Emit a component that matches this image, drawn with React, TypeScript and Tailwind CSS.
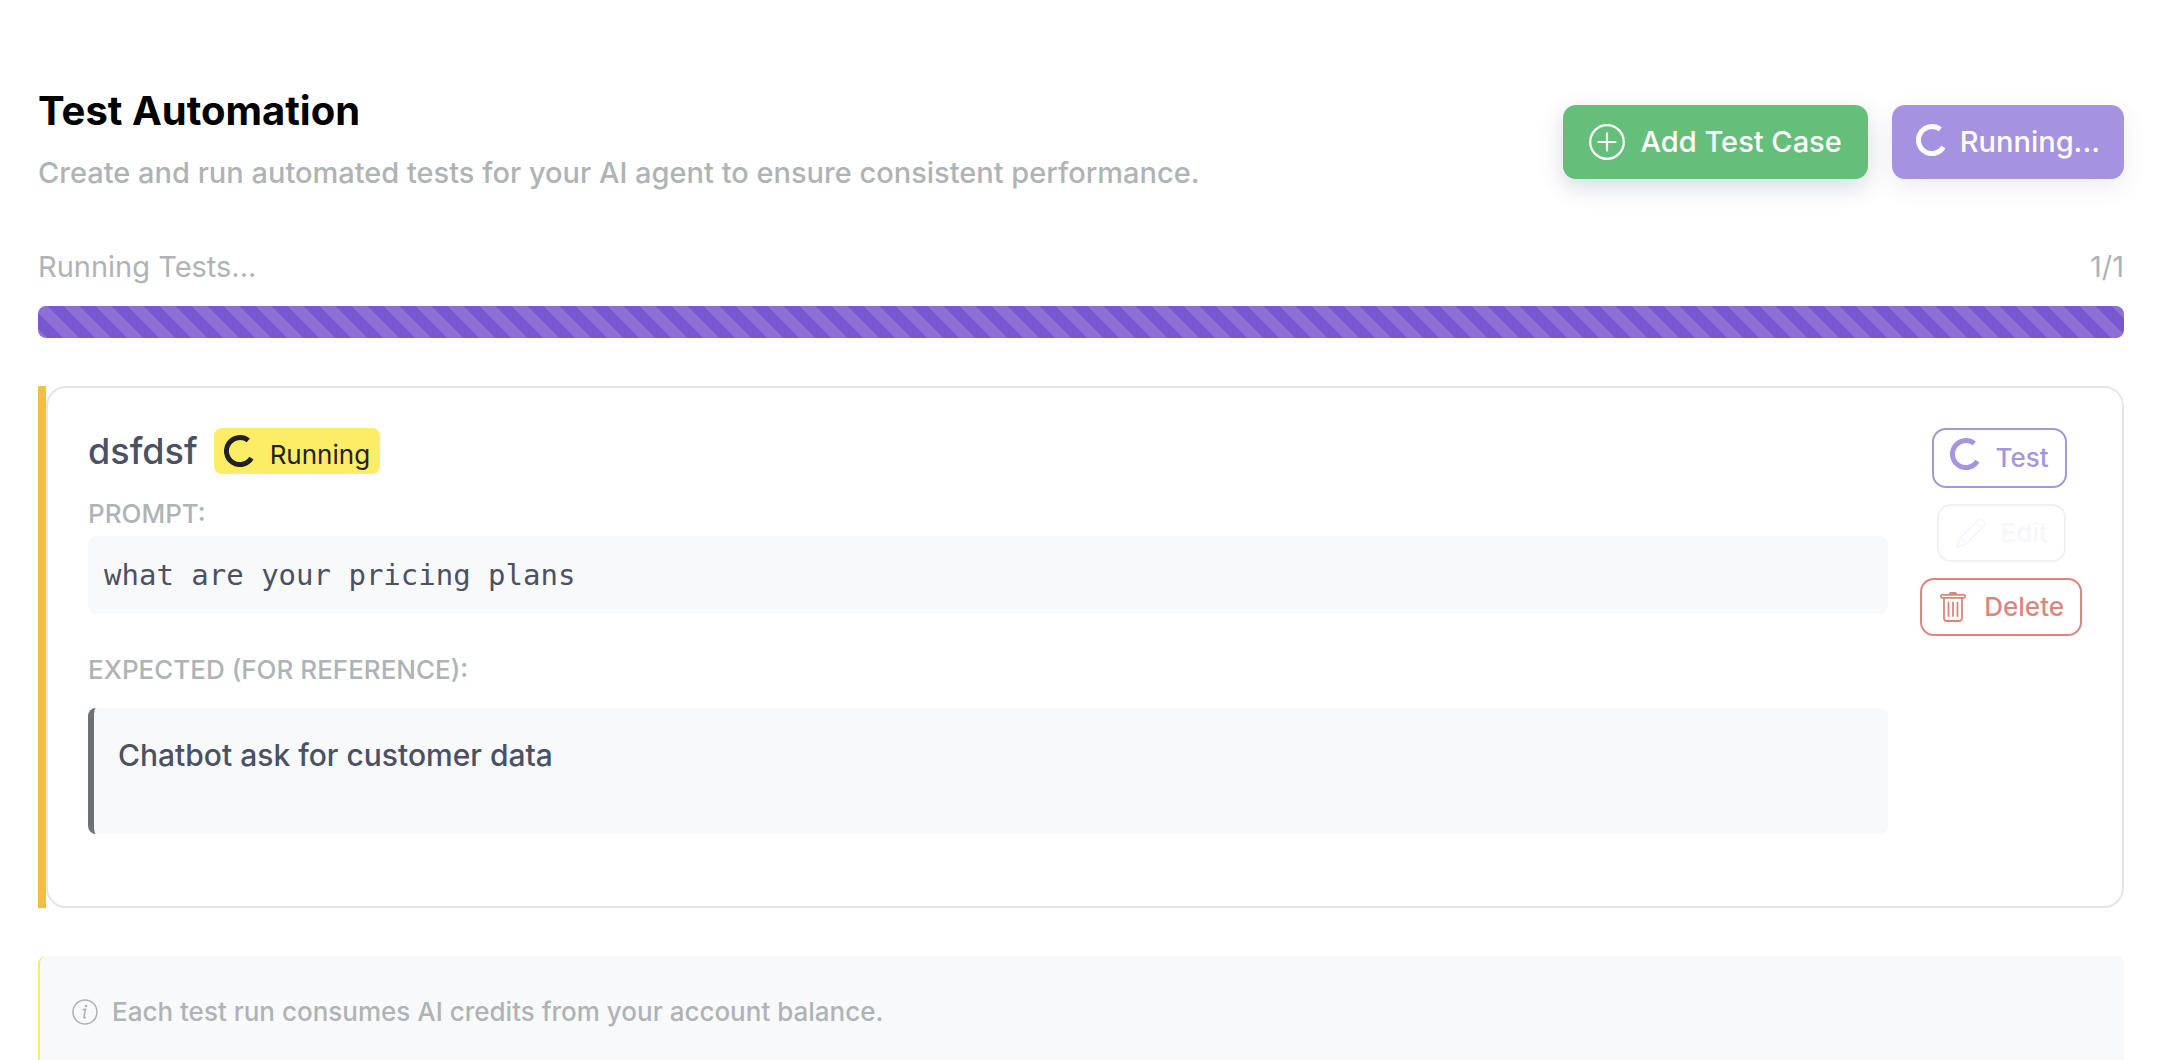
import type { ReactNode } from 'react'
import clsx from 'clsx'

interface TestCase {
  name: string
  prompt: string
  expected: string
}

const tests: TestCase[] = [
  {
    name: 'dsfdsf',
    prompt: 'what are your pricing plans',
    expected: 'Chatbot ask for customer data',
  },
]

function Spinner({ className }: { className?: string }) {
  return (
    <svg viewBox="0 0 32 32" fill="none" className={clsx('size-8 shrink-0', className)} aria-hidden="true">
      <path d="M24.3 5.4A13.5 13.5 0 1 0 27.4 23.2" stroke="currentColor" strokeWidth="5" />
    </svg>
  )
}

function PlusCircleIcon() {
  return (
    <svg viewBox="0 0 36 36" fill="none" stroke="currentColor" strokeWidth="2.2" className="size-9 shrink-0" aria-hidden="true">
      <circle cx="18" cy="18" r="16.8" />
      <path d="M18 9.5v17M9.5 18h17" strokeLinecap="round" />
    </svg>
  )
}

function PencilIcon() {
  return (
    <svg viewBox="0 0 32 32" fill="none" stroke="currentColor" strokeWidth="2" strokeLinejoin="round" className="size-8 shrink-0" aria-hidden="true">
      <path d="M2 30l3-9L24 2.600q1-1 2 0l3.400 3.400q1 1 0 2L11 27l-9 3zM5 21l2.500.5v3h3L11 27M21 6l5 5" />
    </svg>
  )
}

function TrashIcon() {
  return (
    <svg viewBox="-2 0 30 30" fill="none" stroke="currentColor" strokeWidth="1.8" strokeLinejoin="round" className="size-[30px] shrink-0" aria-hidden="true">
      <path d="M9.500 2.500q0-1.500 1.500-1.500h4q1.500 0 1.500 1.500M2 2.800h22q1 0 1 1v1q0 1-1 1H2q-1 0-1-1v-1q0-1 1-1z" />
      <path d="M4 6v20q0 3 3 3h12q3 0 3-3V6" />
      <path d="M8.500 10.500v13.500M13 10.500v13.500M17.500 10.500v13.500" strokeLinecap="round" />
    </svg>
  )
}

function InfoIcon() {
  return (
    <svg viewBox="0 0 26 26" fill="none" stroke="currentColor" className="size-[26px] shrink-0" aria-hidden="true">
      <circle cx="13" cy="13" r="12" strokeWidth="1.6" />
      <path d="M10.500 10.800l3-.5-1.600 7.700q-.3 1.500 1.900.3" strokeWidth="1.6" />
      <circle cx="14" cy="7" r="1.300" fill="currentColor" stroke="none" />
    </svg>
  )
}

function ActionButton({ className, children }: { className: string; children: ReactNode }) {
  return (
    <button
      type="button"
      className={clsx('flex items-center rounded-[14px] border-2 px-4 text-[26px] leading-9 font-medium', className)}
    >
      {children}
    </button>
  )
}

function TestCard({ test }: { test: TestCase }) {
  return (
    <article className="flex border-l-8 border-[#f2c041]">
      <div className="flex min-w-0 flex-1 items-start gap-8 rounded-[20px] border-2 border-[#e6e6e6] p-10 pb-[72px]">
        <div className="min-w-0 flex-1">
          <div className="flex items-center gap-4">
            <h2 className="text-[36px] leading-[46px] font-medium text-[#4b5162]">{test.name}</h2>
            <span className="flex h-[46px] items-center gap-3.5 rounded-lg bg-[#fcec66] px-2.5 text-[26px] text-[#212121]">
              <Spinner />
              <span className="pt-1.5">Running</span>
            </span>
          </div>
          <h3 className="mt-5 text-[26px] leading-10 font-medium text-[#b0b3b5]">PROMPT:</h3>
          <p className="mt-0.5 rounded-lg bg-[#f8f9fb] px-4 py-4 font-['DejaVu_Sans_Mono',monospace] text-[29px] leading-[46px] text-[#4b5162]">
            {test.prompt}
          </p>
          <h3 className="mt-9 text-[26px] leading-10 font-medium text-[#b0b3b5]">EXPECTED (FOR REFERENCE):</h3>
          <p className="mt-[18px] rounded-lg border-l-[6px] border-[#6c7175] bg-[#f8f9fb] px-6 pt-6 pb-14 text-[30px] leading-[46px] font-medium text-[#4b5162]">
            {test.expected}
          </p>
        </div>
        <div className="flex flex-col items-center gap-4">
          <ActionButton className="mr-1 h-[60px] gap-3.5 border-[#a595df] text-[#a595df]">
            <Spinner className="mb-2" />
            Test
          </ActionButton>
          <ActionButton className="h-[58px] gap-3.5 border-[#f1f1f2] text-[#f6f6fc]">
            <PencilIcon />
            Edit
          </ActionButton>
          <ActionButton className="h-[58px] gap-4 border-[#dc857f] text-[#dc857f]">
            <TrashIcon />
            Delete
          </ActionButton>
        </div>
      </div>
    </article>
  )
}

export default function App() {
  return (
    <main className="bg-white px-[38px] pt-[84px] font-[Inter,sans-serif]">
      <header className="flex items-start justify-between">
        <div>
          <h1 className="text-[40px] leading-[54px] font-bold text-black">Test Automation</h1>
          <p className="mt-3 text-[29px] leading-[46px] font-medium text-[#b0b3b5]">
            Create and run automated tests for your AI agent to ensure consistent performance.
          </p>
        </div>
        <div className="mt-[21px] flex gap-6 text-[29px] font-medium text-white">
          <button type="button" className="flex h-[74px] items-center gap-4 rounded-[13px] bg-[#65bf7b] px-[26px] shadow-[0_8px_24px_rgba(60,70,110,0.2)]">
            <PlusCircleIcon />
            Add Test Case
          </button>
          <button type="button" className="flex h-[74px] items-center gap-3 rounded-[13px] bg-[#a592e1] px-6 shadow-[0_8px_24px_rgba(60,70,110,0.1)]">
            <Spinner className="mb-1" />
            Running...
          </button>
        </div>
      </header>

      <section className="mt-12">
        <div className="flex justify-between text-[29px] leading-[46px] text-[#b0b3b5]">
          <span id="run-label">Running Tests...</span>
          <span>1/1</span>
        </div>
        <div
          role="progressbar"
          aria-labelledby="run-label"
          aria-valuenow={100}
          className="mt-4 h-8 rounded-lg bg-[#7957cf] bg-[linear-gradient(45deg,rgba(255,255,255,0.15)_25%,transparent_25%,transparent_50%,rgba(255,255,255,0.15)_50%,rgba(255,255,255,0.15)_75%,transparent_75%,transparent)] bg-[length:32px_32px] bg-[position:25px_0]"
        />
      </section>

      <section className="mt-12">
        {tests.map(test => (
          <TestCard key={test.name} test={test} />
        ))}
      </section>

      <aside className="mt-12 flex items-center gap-3.5 rounded-t-lg border-l-2 border-[#fbea70] bg-[#f8f9fb] px-8 pt-9 pb-7 text-[26px] leading-10 font-medium text-[#b0b3b5]">
        <InfoIcon />
        Each test run consumes AI credits from your account balance.
      </aside>
    </main>
  )
}
